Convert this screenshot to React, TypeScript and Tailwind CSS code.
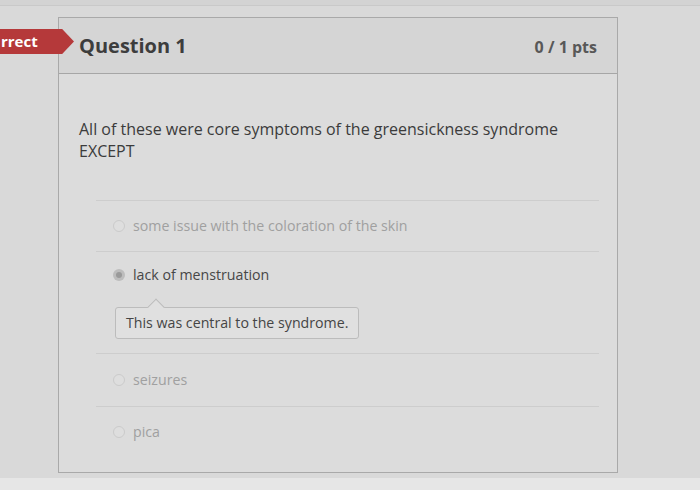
const answers = [
  { text: "some issue with the coloration of the skin", picked: false, h: "h-[50px]" },
  { text: "lack of menstruation", picked: true, h: "h-[46px]", comment: "This was central to the syndrome." },
  { text: "seizures", picked: false, h: "h-[52px]" },
  { text: "pica", picked: false, h: "h-[50px]" },
];

function Radio({ picked }: { picked: boolean }) {
  if (picked) {
    return (
      <span className="flex h-[12px] w-[12px] flex-none items-center justify-center rounded-full bg-[#bdbdbd]">
        <span className="h-[6px] w-[6px] rounded-full bg-[#9a9a9a]" />
      </span>
    );
  }
  return <span className="h-[12px] w-[12px] flex-none rounded-full border border-[#cbcbcb] bg-[#dedede]" />;
}

export default function App() {
  return (
    <div className="relative h-[490px] w-[700px] overflow-hidden bg-[#d9d9d9] font-['Open_Sans',sans-serif]">
      <div className="h-[6px] border-b border-[#c9c9c9] bg-[#d3d3d3]" />

      {/* result flag, cut off by the screen edge */}
      <div className="absolute left-0 top-[29px] flex h-[25px] w-[74px] items-center bg-[#b5393a] pl-[1px] text-[15px] font-bold leading-none text-white [clip-path:polygon(0_0,84%_0,100%_50%,84%_100%,0_100%)]">
        rrect
      </div>

      <div className="pl-[58px] pt-[11px]">
        <section className="h-[456px] w-[560px] border border-[#a9a9a9] bg-[#dcdcdc]">
          <header className="flex h-[56px] items-center justify-between border-b border-[#a6a6a6] bg-[#d5d5d5] pl-[20px] pr-[20px]">
            <h2 className="pt-[1px] text-[20px] font-bold text-[#3d3d3d]">Question 1</h2>
            <span className="pt-[3px] text-[16px] font-bold text-[#585858]">0 / 1 pts</span>
          </header>

          <div className="pt-[44px]">
            <p className="pl-[20px] pr-[40px] text-[16px] leading-[22px] text-[#3b3b3b]">
              All of these were core symptoms of the greensickness syndrome EXCEPT
            </p>

            <ul className="ml-[37px] mr-[18px] mt-[38px]">
              {answers.map((a) => (
                <li key={a.text} className="border-t border-[#cdcdcd]">
                  <div className={`flex ${a.h} items-center gap-[8px] pl-[17px]`}>
                    <Radio picked={a.picked} />
                    <span className={`text-[14.2px] ${a.picked ? "text-[#474747]" : "text-[#a0a0a0]"}`}>
                      {a.text}
                    </span>
                  </div>
                  {a.comment && (
                    <div className="pb-[14px] pl-[19px] pt-[9px]">
                      <div className="relative inline-block rounded-[3px] border border-[#bcbcbc] bg-[#e0e0e0] px-[10px] py-[5px] text-[14.2px] leading-[20px] text-[#454545]">
                        <span className="absolute -top-[7px] left-[34px] h-[12px] w-[12px] rotate-45 border-l border-t border-[#bcbcbc] bg-[#e0e0e0]" />
                        <span className="relative">{a.comment}</span>
                      </div>
                    </div>
                  )}
                </li>
              ))}
            </ul>
          </div>
        </section>
      </div>

      <div className="absolute bottom-0 left-0 h-[12px] w-full bg-[#e6e6e6]" />
    </div>
  );
}
